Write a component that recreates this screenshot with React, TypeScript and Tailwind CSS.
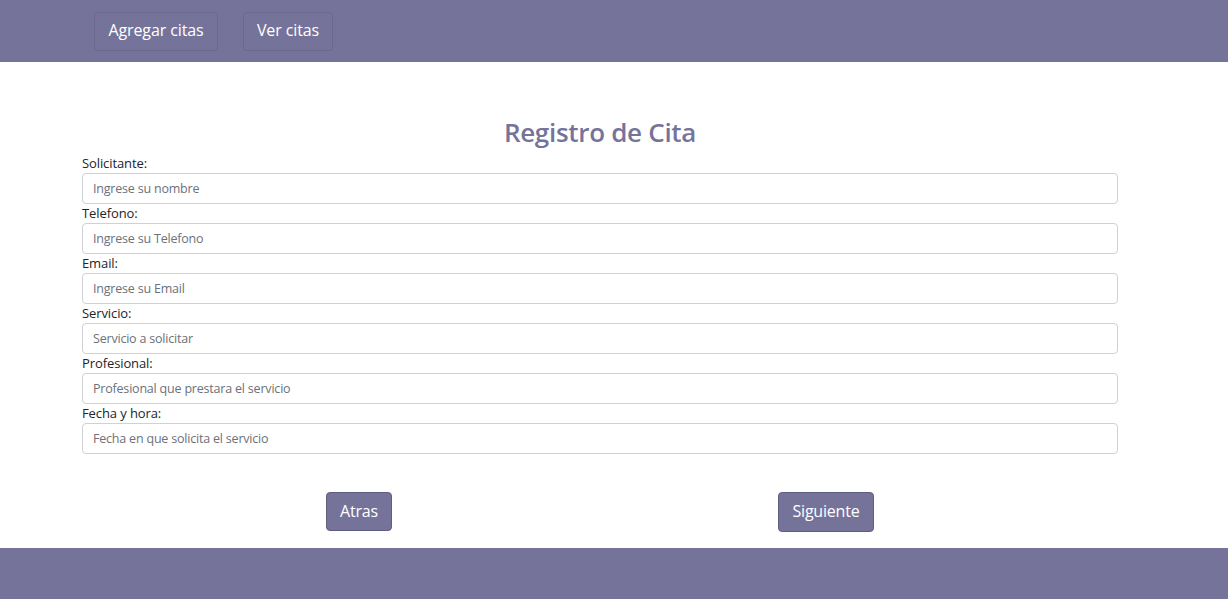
import React from "react";

const fields = [
  ["Solicitante:", "Ingrese su nombre"],
  ["Telefono:", "Ingrese su Telefono"],
  ["Email:", "Ingrese su Email"],
  ["Servicio:", "Servicio a solicitar"],
  ["Profesional:", "Profesional que prestara el servicio"],
  ["Fecha y hora:", "Fecha en que solicita el servicio"],
];

export default function App() {
  return (
    <div
      className="w-[1228px] h-[599px] flex flex-col bg-white overflow-hidden"
      style={{ fontFamily: '"Open Sans", "Noto Sans", sans-serif' }}
    >
      <header className="h-[62px] shrink-0 bg-[#76739b] flex items-center pl-[94px] gap-[25px]">
        <button className="h-[39px] w-[124px] pb-[3px] rounded-[4px] border border-[#6b698d] text-white text-[16px] tracking-[-0.1px]">
          Agregar citas
        </button>
        <button className="h-[39px] w-[90px] pb-[3px] rounded-[4px] border border-[#6b698d] text-white text-[16px] tracking-[-0.1px]">
          Ver citas
        </button>
      </header>
      <main className="flex-1 flex flex-col pt-[49px]">
        <div className="ml-[82px] w-[1036px] flex flex-col">
          <h1 className="h-[43px] flex items-center justify-center text-[26px] font-semibold text-[#76739b] tracking-[-0.3px]">
            Registro de Cita
          </h1>
          {fields.map(([label, ph]) => (
            <div key={label} className="flex flex-col">
              <label className="h-[19px] flex items-center text-[13px] text-[#212529] tracking-[-0.1px]">
                {label}
              </label>
              <input
                className="h-[31px] w-full rounded-[4px] border border-[#cfd1d4] px-[10px] text-[12.5px] tracking-[-0.2px] placeholder:text-[#6c717a] outline-none"
                placeholder={ph}
              />
            </div>
          ))}
        </div>
        <div className="flex mt-[38px] pl-[326px]">
          <button className="h-[39px] w-[66px] pb-[2px] rounded-[4px] border border-[#5f5d80] bg-[#76739b] text-white text-[16px] tracking-[-0.2px]">
            Atras
          </button>
          <button className="h-[40px] w-[96px] pb-[3px] ml-[386px] rounded-[4px] border border-[#5f5d80] bg-[#76739b] text-white text-[16px] tracking-[-0.2px]">
            Siguiente
          </button>
        </div>
      </main>
      <footer className="h-[51px] shrink-0 bg-[#76739b]" />
    </div>
  );
}
